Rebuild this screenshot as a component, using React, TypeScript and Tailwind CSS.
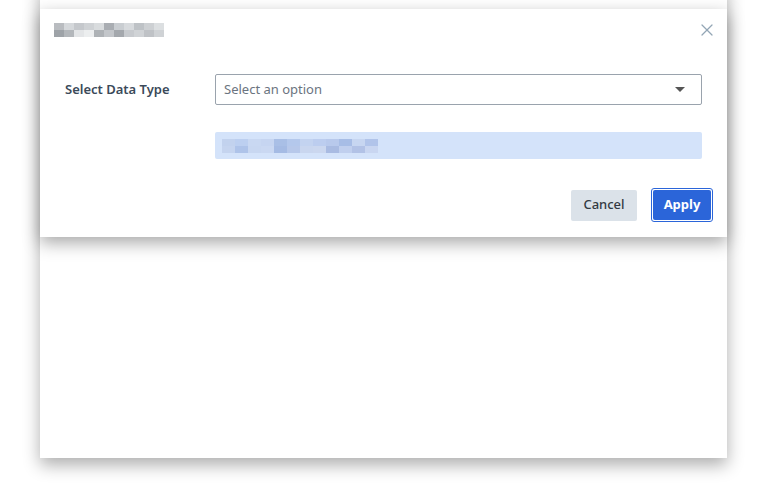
import { X } from 'lucide-react';

const titleBlocks = ['#b9bcc0', '#d5d8db', '#c5c8cc', '#cfd2d5', '#d9dcde', '#a9adb2', '#c9cdd1', '#d7dadd', '#bec2c6', '#cdd0d3', '#dcdfe1'];
const titleBlocks2 = ['#9ea3a8', '#b3b7bb', '#e3e5e7', '#eceeef', '#aeb2b6', '#c3c6ca', '#a4a8ad', '#c7cace', '#d0d3d6', '#bfc2c6', '#cfd2d5'];
const valueBlocks = ['#c2d2ee', '#bccff0', '#c9d8f2', '#c6d5f1', '#a9bfe6', '#b4c8ec', '#c3d3f0', '#bccdef', '#b8c9ec', '#a7bde6', '#c7d6f1', '#b1c4ea'];
const valueBlocks2 = ['#c5d4ef', '#aec3e9', '#c8d7f1', '#cad8f2', '#a5bbe4', '#b7c8ea', '#c9d6ef', '#cbd7ef', '#a9bbe2', '#c0cfee', '#b2c2e6', '#c9d6f1'];

function Pixels({ top, bottom, w }: { top: string[]; bottom: string[]; w: string }) {
  return (
    <div className="flex flex-col">
      <div className="flex">
        {top.map((c, i) => (<div key={i} className={`${w} h-[7px]`} style={{ backgroundColor: c }} />))}
      </div>
      <div className="flex">
        {bottom.map((c, i) => (<div key={i} className={`${w} h-[7px]`} style={{ backgroundColor: c }} />))}
      </div>
    </div>
  );
}

export default function App() {
  return (
    <div className="relative min-h-screen bg-white overflow-hidden" style={{ fontFamily: '"Noto Sans", "Open Sans", sans-serif' }}>
      {/* window behind the dialog */}
      <div className="ml-[40px] -mt-[20px] w-[687px] h-[478px] bg-white shadow-[0_7px_16px_rgba(0,0,0,0.32)]" />

      <div className="absolute left-[40px] top-[9px] w-[687px] h-[228px] bg-white shadow-[0_6px_16px_rgba(0,0,0,0.34)]">
        <div className="flex items-start justify-between pl-[14px] pr-[10px] pt-[14px]">
          <Pixels top={titleBlocks} bottom={titleBlocks2} w="w-[10px]" />
          <X size={20} strokeWidth={1.5} className="text-[#93a6b5] -mt-[3px]" />
        </div>

        <div className="flex items-center mt-[34px] pl-[25px] pr-[25px]">
          <div className="w-[150px] text-[13px] font-semibold text-[#3b4a5a]">Select Data Type</div>
          <div className="flex-1 h-[31px] border border-[#9aa3ad] rounded-[2px] flex items-center justify-between pl-[8px] pr-[16px]">
            <span className="text-[13px] text-[#6b7480]">Select an option</span>
            <div className="w-0 h-0 border-l-[5px] border-r-[5px] border-t-[5px] border-l-transparent border-r-transparent border-t-[#555]" />
          </div>
        </div>

        <div className="ml-[175px] mr-[25px] mt-[27px] h-[27px] bg-[#d4e3fa] rounded-[2px] flex items-center pl-[7px]">
          <Pixels top={valueBlocks} bottom={valueBlocks2} w="w-[13px]" />
        </div>

        <div className="flex justify-end items-center gap-[14px] pr-[14px] mt-[29px]">
          <button className="h-[31px] w-[66px] rounded-[2px] bg-[#dbe2e9] text-[13px] font-medium text-[#333a42]">Cancel</button>
          <button className="h-[34px] w-[62px] rounded-[3px] border border-[#2b65d9] p-[1px]">
            <div className="h-full w-full rounded-[2px] bg-[#2b65d9] text-[13px] font-bold text-white flex items-center justify-center">Apply</div>
          </button>
        </div>
      </div>
    </div>
  );
}
